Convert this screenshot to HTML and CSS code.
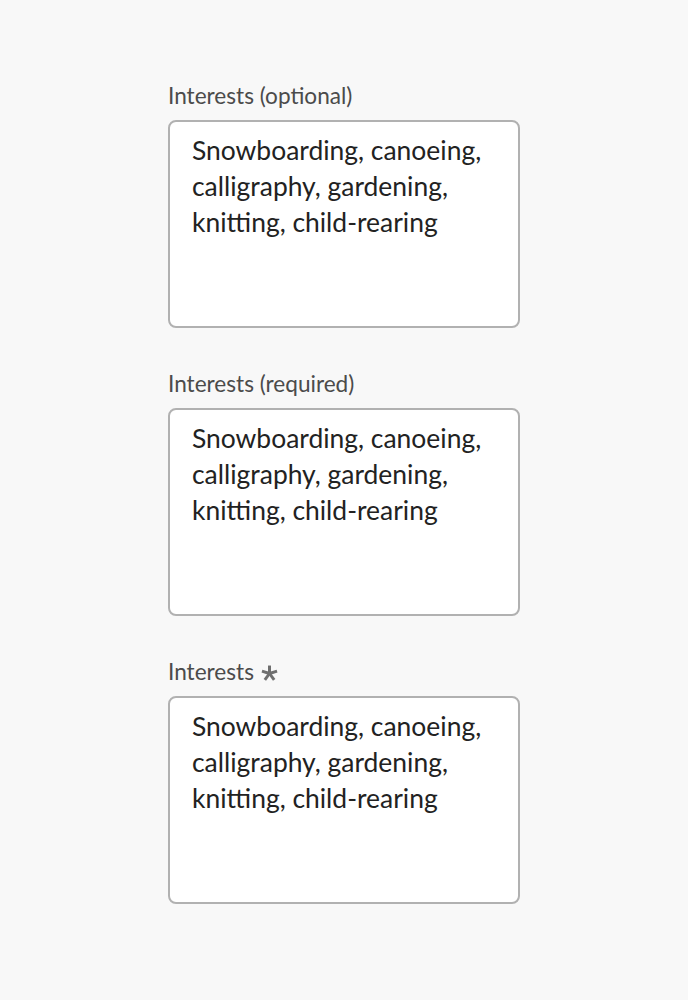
FILE: index.html
```html
<!DOCTYPE html>
<html lang="en">
<head>
<meta charset="utf-8">
<title>Text areas</title>
<link rel="stylesheet" href="styles.css">
</head>
<body>
<main class="page">
  <div class="field">
    <label class="label" for="t1">Interests (optional)</label>
    <textarea class="area" id="t1">Snowboarding, canoeing, calligraphy, gardening, knitting, child-rearing</textarea>
  </div>
  <div class="field">
    <label class="label" for="t2">Interests (required)</label>
    <textarea class="area" id="t2">Snowboarding, canoeing, calligraphy, gardening, knitting, child-rearing</textarea>
  </div>
  <div class="field">
    <label class="label" for="t3">Interests <svg class="asterisk" viewBox="-8 -8 16 16" width="17" height="17" aria-hidden="true"><g stroke="#6e6e6e" stroke-width="2.8" stroke-linecap="butt"><line x1="0" y1="0" x2="0" y2="-7.5"/><line x1="0" y1="0" x2="7.1" y2="-2.3"/><line x1="0" y1="0" x2="4.4" y2="6.1"/><line x1="0" y1="0" x2="-4.4" y2="6.1"/><line x1="0" y1="0" x2="-7.1" y2="-2.3"/></g></svg></label>
    <textarea class="area" id="t3">Snowboarding, canoeing, calligraphy, gardening, knitting, child-rearing</textarea>
  </div>
</main>
</body>
</html>
```

FILE: styles.css
```css
html, body {
  margin: 0;
  padding: 0;
  background: #f8f8f8;
}

.page {
  display: flex;
  flex-direction: column;
  gap: 44px;
  padding: 84px 0 0 168px;
}

.field {
  display: flex;
  flex-direction: column;
  align-items: flex-start;
  gap: 12px;
}

.label {
  font-family: Lato, "Open Sans", sans-serif;
  font-size: 22.6px;
  line-height: 24px;
  color: #4b4b4b;
  display: flex;
  align-items: center;
  gap: 7px;
}

.asterisk {
  display: block;
  margin-top: 3px;
}

.area {
  box-sizing: border-box;
  width: 352px;
  height: 208px;
  margin: 0;
  border: 2px solid #b1b1b1;
  border-radius: 8px;
  background: #ffffff;
  padding: 10px 22px;
  font-family: Lato, "Open Sans", sans-serif;
  font-size: 26.45px;
  line-height: 36px;
  color: #222222;
  resize: none;
  overflow: hidden;
  outline: none;
}
```
